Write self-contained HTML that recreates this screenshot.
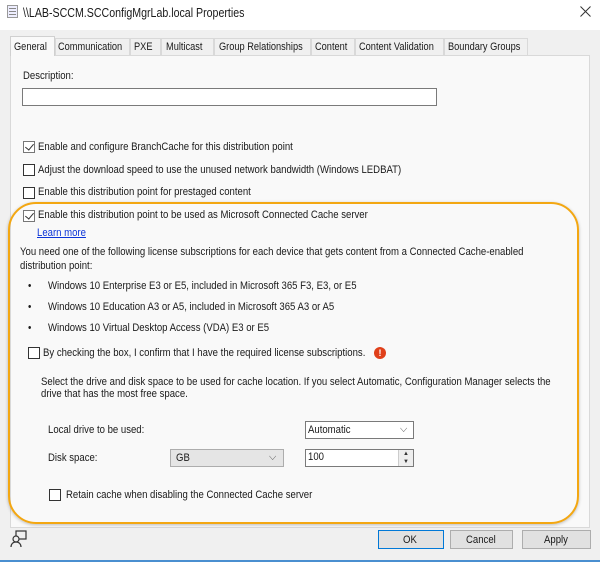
<!DOCTYPE html>
<html><head><meta charset="utf-8"><style>
*{margin:0;padding:0;box-sizing:border-box}
body{width:600px;height:562px;background:#f0f0f0;position:relative;overflow:hidden;font-family:"Liberation Sans",Arial,sans-serif;color:#1a1a1a}
.t{position:absolute;white-space:nowrap;font-size:11px;line-height:12px;transform:scaleX(.87);transform-origin:left center}
.cb{position:absolute;width:12px;height:12px;border:1px solid #333;background:#fff}
.ck::after{content:"";position:absolute;left:3px;top:0px;width:4px;height:7px;border:solid #333;border-width:0 1.3px 1.3px 0;transform:rotate(40deg)}
.ck{border-color:#777}
.box{position:absolute;background:#fff;border:1px solid #7a7a7a}
.btn{position:absolute;background:#e1e1e1;border:1px solid #adadad}
.tab{position:absolute;top:38px;height:17px;border:1px solid #d9d9d9;border-bottom:none;background:#f0f0f0}
.tb{transform:scaleX(.84)}
</style></head><body>
<div style="position:absolute;left:0;top:0;width:600px;height:30px;background:#fff"></div>
<div style="position:absolute;left:7px;top:5px;width:11px;height:13px;border:1px solid #999;background:#eef"></div>
<div style="position:absolute;left:9px;top:8px;width:7px;height:1px;background:#888;box-shadow:0 3px #888,0 6px #888"></div>
<div class="t" style="left:23px;top:6px;font-size:12.5px;line-height:14px;transform:scaleX(.85)">\\LAB-SCCM.SCConfigMgrLab.local Properties</div>
<svg style="position:absolute;left:580px;top:6px" width="11" height="11"><path d="M0.5 0.5L10.5 10.5M10.5 0.5L0.5 10.5" stroke="#333" stroke-width="1"/></svg>

<div style="position:absolute;left:10px;top:55px;width:580px;height:473px;background:#f9f9f9;border:1px solid #d9d9d9"></div>
<div class="tab" style="left:10px;top:36px;height:20px;width:45px;background:#f9f9f9;border-color:#d0d0d0"></div>
<div class="tab" style="left:55px;width:75px"></div>
<div class="tab" style="left:130px;width:31px"></div>
<div class="tab" style="left:161px;width:53px"></div>
<div class="tab" style="left:214px;width:97px"></div>
<div class="tab" style="left:311px;width:44px"></div>
<div class="tab" style="left:355px;width:89px"></div>
<div class="tab" style="left:444px;width:84px"></div>
<div class="t tb" style="left:14px;top:41px">General</div>
<div class="t tb" style="left:58px;top:41px">Communication</div>
<div class="t tb" style="left:134px;top:41px">PXE</div>
<div class="t tb" style="left:166px;top:41px">Multicast</div>
<div class="t tb" style="left:219px;top:41px">Group Relationships</div>
<div class="t tb" style="left:315px;top:41px">Content</div>
<div class="t tb" style="left:359px;top:41px">Content Validation</div>
<div class="t tb" style="left:448px;top:41px">Boundary Groups</div>

<div class="t" style="left:23px;top:70px">Description:</div>
<div class="box" style="left:22px;top:88px;width:415px;height:18px"></div>

<div class="cb ck" style="left:23px;top:141px"></div><div class="t" style="left:38px;top:141px">Enable and configure BranchCache for this distribution point</div>
<div class="cb" style="left:23px;top:164px"></div><div class="t" style="left:38px;top:164px">Adjust the download speed to use the unused network bandwidth (Windows LEDBAT)</div>
<div class="cb" style="left:23px;top:187px"></div><div class="t" style="left:38px;top:186px">Enable this distribution point for prestaged content</div>

<div style="position:absolute;left:8px;top:202px;width:571px;height:322px;border:2.5px solid #f3a712;border-radius:28px;box-shadow:0 1px 3px rgba(0,0,0,.25)"></div>

<div class="cb ck" style="left:23px;top:210px"></div><div class="t" style="left:38px;top:209px">Enable this distribution point to be used as Microsoft Connected Cache server</div>
<div class="t" style="left:37px;top:227px;color:#0b34d8;text-decoration:underline">Learn more</div>
<div class="t" style="left:20px;top:246px">You need one of the following license subscriptions for each device that gets content from a Connected Cache-enabled</div>
<div class="t" style="left:20px;top:260px">distribution point:</div>
<div class="t" style="left:28px;top:280px">•</div><div class="t" style="left:48px;top:280px">Windows 10 Enterprise E3 or E5, included in Microsoft 365 F3, E3, or E5</div>
<div class="t" style="left:28px;top:301px">•</div><div class="t" style="left:48px;top:301px">Windows 10 Education A3 or A5, included in Microsoft 365 A3 or A5</div>
<div class="t" style="left:28px;top:322px">•</div><div class="t" style="left:48px;top:322px">Windows 10 Virtual Desktop Access (VDA) E3 or E5</div>
<div class="cb" style="left:28px;top:347px"></div><div class="t" style="left:43px;top:347px">By checking the box, I confirm that I have the required license subscriptions.</div>
<div style="position:absolute;left:374px;top:347px;width:12px;height:12px;border-radius:50%;background:#e0401a;color:#fff;font-size:9px;font-weight:bold;text-align:center;line-height:12px">!</div>
<div class="t" style="left:41px;top:376px">Select the drive and disk space to be used for cache location. If you select Automatic, Configuration Manager selects the</div>
<div class="t" style="left:41px;top:388px">drive that has the most free space.</div>

<div class="t" style="left:48px;top:424px">Local drive to be used:</div>
<div class="box" style="left:305px;top:421px;width:109px;height:18px"></div>
<div class="t" style="left:308px;top:424px">Automatic</div>
<div class="t" style="left:400px;top:423px;color:#555">⌵</div>
<div class="t" style="left:48px;top:452px">Disk space:</div>
<div class="box" style="left:170px;top:449px;width:114px;height:18px;background:#e5e5e5;border-color:#adadad"></div>
<div class="t" style="left:176px;top:452px">GB</div>
<div class="t" style="left:269px;top:451px;color:#555">⌵</div>
<div class="box" style="left:305px;top:449px;width:109px;height:18px"></div>
<div class="t" style="left:308px;top:451px">100</div>
<div style="position:absolute;left:398px;top:450px;width:15px;height:16px;background:#eee;border-left:1px solid #ccc;font-size:6px;line-height:8px;text-align:center;color:#333">▲<br>▼</div>
<div class="cb" style="left:49px;top:489px"></div><div class="t" style="left:66px;top:489px">Retain cache when disabling the Connected Cache server</div>

<svg style="position:absolute;left:10px;top:530px" width="18" height="18" viewBox="0 0 18 18" fill="none" stroke="#333" stroke-width="1.2"><rect x="6" y="1" width="10" height="8"/><circle cx="6" cy="9" r="3" fill="#f0f0f0"/><path d="M1 17c0-3 2-5 5-5s5 2 5 5"/></svg>
<div class="btn" style="left:378px;top:530px;width:66px;height:19px;border:1.5px solid #0078d7"></div><div class="t" style="left:403px;top:534px">OK</div>
<div class="btn" style="left:450px;top:530px;width:63px;height:19px"></div><div class="t" style="left:466px;top:534px">Cancel</div>
<div class="btn" style="left:522px;top:530px;width:69px;height:19px"></div><div class="t" style="left:544px;top:534px">Apply</div>
<div style="position:absolute;left:0;top:560px;width:600px;height:2px;background:#4a8fd0"></div>
</body></html>
